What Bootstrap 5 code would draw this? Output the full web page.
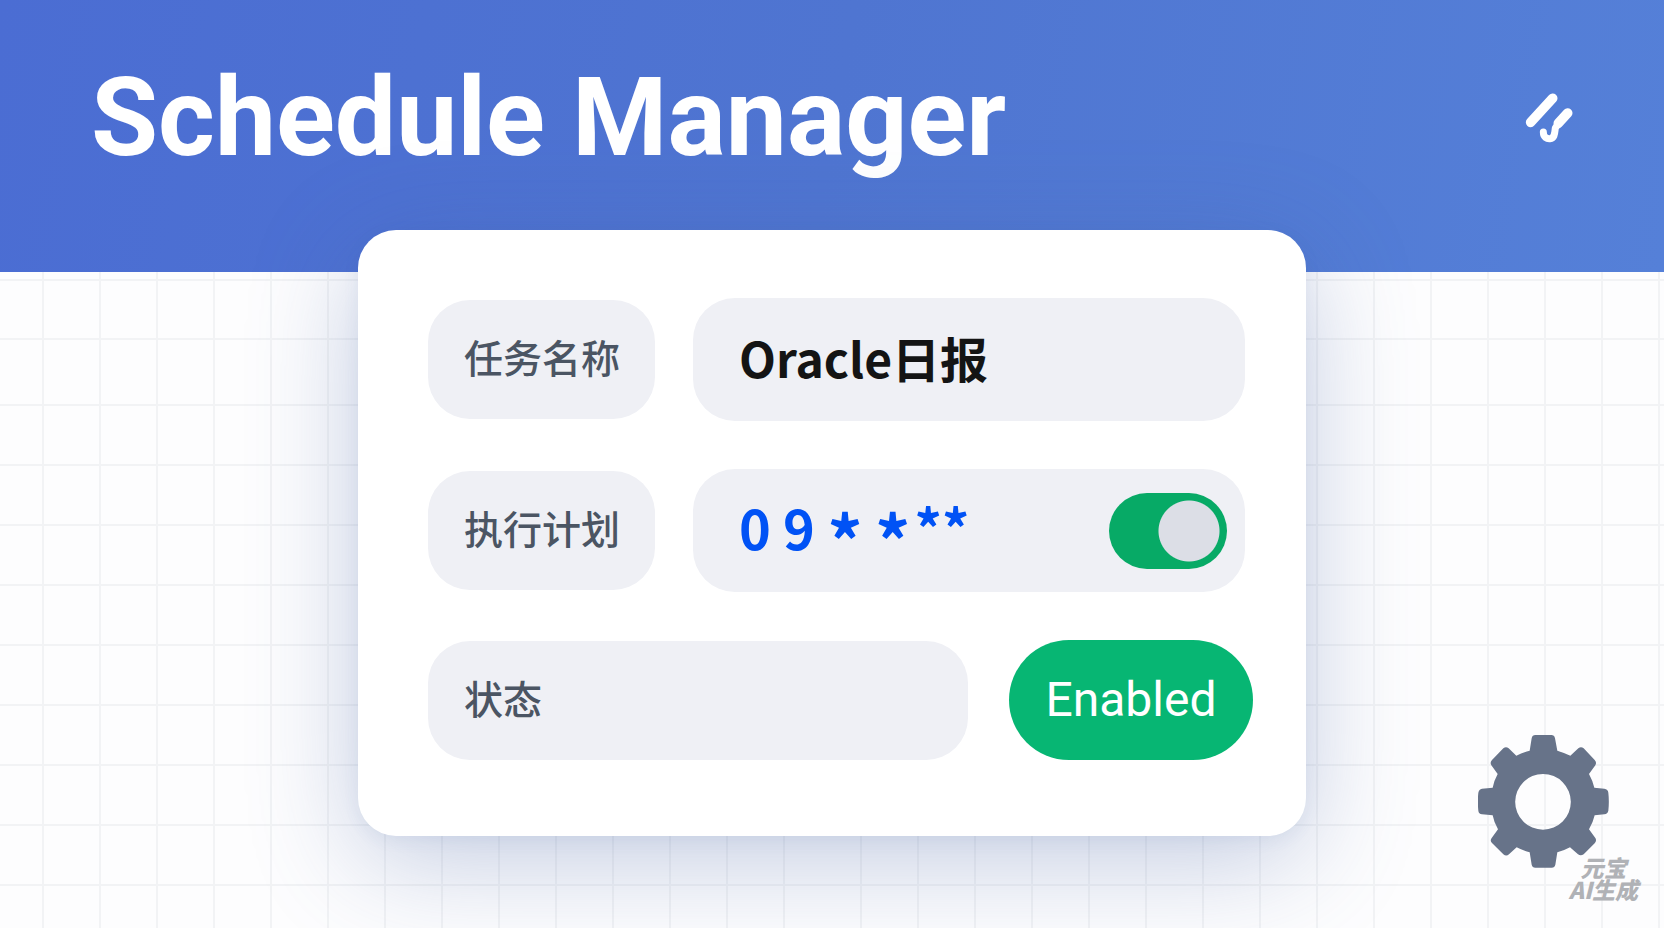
<!DOCTYPE html>
<html lang="zh-CN">
<head>
<meta charset="utf-8">
<meta name="viewport" content="width=device-width, initial-scale=1">
<title>Schedule Manager</title>
<link href="https://cdn.jsdelivr.net/npm/bootstrap@5.3.0/dist/css/bootstrap.min.css" rel="stylesheet">
<style>
  body { font-family: "Noto Sans CJK SC", sans-serif; background: #fdfdfe; }

  .app-header {
    min-height: 272px;
    padding: 50px 91px 86px;
    background: linear-gradient(100deg, #4b6dd3, #4f75d1 50%, #5580d8);
  }
  .app-title { font-family: Roboto, sans-serif; font-size: 109px; line-height: 136px; font-weight: 700; }

  /* grid paper: each half is measured from its own outer edge */
  .board {
    display: grid;
    grid-template-columns: 1fr minmax(0, 948px) 1fr;
    background:
      repeating-linear-gradient(to right, transparent 0 42px, #f2f3f5 42px 44px, transparent 44px 57px) left / 50% 100% no-repeat,
      repeating-linear-gradient(to left, transparent 0 4px, #f2f3f5 4px 6px, transparent 6px 57px) right / 50% 100% no-repeat,
      repeating-linear-gradient(transparent 0 7px, #f2f3f5 7px 9px, transparent 9px 59px) top / 100% 100px no-repeat,
      repeating-linear-gradient(transparent 0 32px, #f2f3f5 32px 34px, transparent 34px 60px) 0 100px / 100% 100% no-repeat;
  }

  .task-card {
    grid-column: 2;
    align-self: start;
    margin-top: -42px;
    padding: 68px 53px 76px 70px;
    border-radius: 38px;
    gap: 48px;
    background: #fff;
    box-shadow: 0 24px 110px rgba(70, 98, 165, .32), 0 4px 16px rgba(70, 98, 165, .08);
  }
  .line-gap { gap: 38px; }
  .line-gap-wide { gap: 41px; }
  .line-inset { padding-right: 8px; }
  .pill { background: #eff0f5; border-radius: 42px; }
  .pill-label { height: 119px; width: 227px; padding: 0 0 6px 36px; font-size: 39px; font-weight: 500; color: #4b5563; }
  .pill-field { height: 123px; padding: 0 18px 0 46px; min-width: 0; }
  .task-name { font-size: 48px; font-weight: 700; color: #141414; line-height: 72px; }
  .task-name.form-control-plaintext { padding: 0 0 6px; }
  .task-name:focus { outline: 0; }

  .cron { padding-top: 8px; font-size: 54px; line-height: 72px; font-weight: 700; color: #0052f5; white-space: pre; }
  .cron-any { font-size: 70px; line-height: 0; vertical-align: -18px; }
  .cron-thin { font-size: 18px; }

  .form-check-input.plan-switch {
    width: 118px; height: 76px; margin: 0; border: 0; border-radius: 38px;
    background: radial-gradient(circle at calc(100% - 38px) 50%, #dcdee6 0 30px, transparent 31px) #07aa66;
  }
  .btn-state {
    width: 244px; height: 120px; border: 0; border-radius: 60px;
    background: #07b673; color: #fff; font-family: Roboto, sans-serif; font-size: 48px;
  }
  .btn-state:hover { background: #07aa66; color: #fff; }

  .corner { grid-column: 3; padding: 0 26px 28px 0; }
  .corner-gear { margin-right: 29px; margin-bottom: -12px; }
  .stamp { font-size: 23px; line-height: 22px; font-weight: 900; font-style: italic; color: #b0b2b6; }
</style>
</head>
<body class="min-vh-100 d-flex flex-column">

<header class="app-header d-flex justify-content-between align-items-center">
  <h1 class="app-title text-white mb-0">Schedule Manager</h1>
  <svg class="flex-shrink-0" width="48" height="50" viewBox="74 71 144 150" fill="none" stroke="#fff" stroke-linecap="round" stroke-linejoin="round" aria-hidden="true">
    <path d="M91 159 157 87M202 131 174 162" stroke-width="29"/>
    <path d="M129 188C129 204 140 209 149 208C164 206 163 190 165 176L172 166" stroke-width="21"/>
  </svg>
</header>

<main class="board flex-grow-1">
  <form class="task-card d-flex flex-column">
    <div class="d-flex align-items-center line-gap line-inset">
      <label class="pill pill-label d-flex align-items-center flex-shrink-0" for="taskName">任务名称</label>
      <div class="pill pill-field d-flex align-items-center flex-grow-1">
        <input class="task-name form-control-plaintext" id="taskName" type="text" value="Oracle日报">
      </div>
    </div>

    <div class="d-flex align-items-center line-gap line-inset">
      <label class="pill pill-label d-flex align-items-center flex-shrink-0" for="planOn">执行计划</label>
      <div class="pill pill-field d-flex align-items-center justify-content-between flex-grow-1">
        <span class="cron">0 9 <span class="cron-any">*</span> <span class="cron-any">*</span><span class="cron-thin"> </span>**</span>
        <input class="form-check-input plan-switch flex-shrink-0" id="planOn" type="checkbox" role="switch" checked>
      </div>
    </div>

    <div class="d-flex align-items-center line-gap-wide">
      <label class="pill pill-label d-flex align-items-center flex-grow-1" for="state">状态</label>
      <button class="btn btn-state flex-shrink-0 p-0" id="state" type="button">Enabled</button>
    </div>
  </form>

  <aside class="corner d-flex flex-column align-items-end justify-content-end">
    <svg class="corner-gear" width="131" height="133" viewBox="84 74 393 399" aria-hidden="true">
      <path fill="#677389" fill-rule="evenodd" d="M256 74H304Q313 74 315 84L322 121Q342 127 361 136L385 114Q393 108 401 114L434 149Q441 157 436 165L417 191Q428 211 433 232L463 235Q474 237 475 247Q478 274 475 301Q473 311 463 312L434 315Q429 337 417 357L436 383Q441 391 434 399L401 432Q392 438 384 432L360 411Q342 421 322 426L316 463Q314 472 305 472H256Q247 472 245 463L239 426Q219 421 200 411L177 432Q169 439 160 432L126 398Q119 391 125 383L144 357Q132 337 128 315L96 312Q86 311 85 301Q82 274 85 247Q87 237 96 235L128 232Q132 211 143 191L124 165Q119 157 126 149L160 114Q168 108 176 114L199 136Q218 127 239 121L245 84Q247 74 256 74ZM279 191A83 83 0 1 0 279 358A83 83 0 1 0 279 191Z"/>
    </svg>
    <div class="stamp text-center">元宝<br>AI生成</div>
  </aside>
</main>

<script src="https://cdn.jsdelivr.net/npm/bootstrap@5.3.0/dist/js/bootstrap.bundle.min.js"></script>
</body>
</html>
